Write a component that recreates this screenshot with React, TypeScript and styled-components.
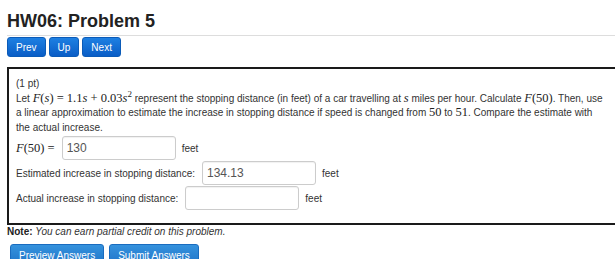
import React from 'react';
import styled, { createGlobalStyle } from 'styled-components';

const GlobalStyle = createGlobalStyle`
  html, body {
    margin: 0;
    padding: 0;
    background: #fff;
    overflow: hidden;
  }
  body {
    font-family: "Liberation Sans", Arial, sans-serif;
    color: #333;
  }
`;

function App() {
  return (
    <Page>
      <GlobalStyle />
      <Header>
        <Title>HW06: Problem 5</Title>
      </Header>
      <NavBar>
        <NavButton>Prev</NavButton>
        <NavButton>Up</NavButton>
        <NavButton>Next</NavButton>
      </NavBar>

      <ProblemBox>
        <Text>(1 pt)</Text>
        <Text>
          Let{' '}
          <M>
            <V>F</V>(<V>s</V>) = 1.1<V>s</V> + 0.03<V>s</V>
            <Sup>2</Sup>
          </M>{' '}
          represent the stopping distance (in feet) of a car travelling at <M><V>s</V></M> miles
          per hour. Calculate <M><V>F</V>(50)</M>. Then, use a linear approximation to estimate the
          increase in stopping distance if speed is changed from <M>50</M> to <M>51</M>. Compare the
          estimate with the actual increase.
        </Text>

        <AnswerRow>
          <Label>
            <M>
              <V>F</V>(50) =
            </M>
          </Label>
          <AnswerInput defaultValue="130" />
          <Unit>feet</Unit>
        </AnswerRow>
        <AnswerRow>
          <Label>Estimated increase in stopping distance:</Label>
          <AnswerInput defaultValue="134.13" />
          <Unit>feet</Unit>
        </AnswerRow>
        <AnswerRow>
          <Label>Actual increase in stopping distance:</Label>
          <AnswerInput defaultValue="" />
          <Unit>feet</Unit>
        </AnswerRow>
      </ProblemBox>

      <Note>
        <b>Note:</b> <i>You can earn partial credit on this problem.</i>
      </Note>

      <SubmitBar>
        <SubmitButton>Preview Answers</SubmitButton>
        <SubmitButton>Submit Answers</SubmitButton>
      </SubmitBar>
    </Page>
  );
}

const Page = styled.div`
  padding-left: 7px;
  width: 700px;
`;

const Header = styled.div`
  padding-top: 11px;
  padding-bottom: 4px;
  border-bottom: 1px solid #ddd;
`;

const Title = styled.h1`
  margin: 0;
  font-size: 18px;
  line-height: 20px;
  font-weight: bold;
  color: #222;
`;

const NavBar = styled.div`
  display: flex;
  gap: 3px;
  margin-top: 1px;
`;

const NavButton = styled.button`
  height: 20px;
  padding: 0 8px;
  border: 1px solid #0b5bb8;
  border-radius: 3px;
  background: linear-gradient(#1e80e2, #0a5dc6);
  color: #fff;
  font-family: "Liberation Sans", Arial, sans-serif;
  font-size: 10px;
`;

const ProblemBox = styled.div`
  margin-top: 10px;
  width: 640px;
  border: 2px solid #1a1a1a;
  padding: 8px 0 13px 7px;
  box-sizing: border-box;
`;

const Text = styled.div`
  width: 592px;
  font-size: 10px;
  line-height: 14.5px;
`;

const M = styled.span`
  font-family: "Liberation Serif", "Times New Roman", serif;
  font-size: 12.5px;
  line-height: 0;
  color: #222;
`;

const V = styled.i`
  font-style: italic;
`;

const Sup = styled.sup`
  font-size: 9px;
  line-height: 0;
  vertical-align: 5px;
`;

const AnswerRow = styled.div`
  display: flex;
  align-items: center;
  height: 24px;
  margin-top: 1px;
  font-size: 10px;

  &:first-of-type {
    margin-top: 4px;
  }
`;

const Label = styled.span`
  margin-right: 7px;
`;

const AnswerInput = styled.input`
  width: 114px;
  height: 24px;
  box-sizing: border-box;
  padding: 0 4px;
  border: 1px solid #ccc;
  border-radius: 3px;
  font-family: "Liberation Sans", Arial, sans-serif;
  font-size: 12px;
  color: #555;
  box-shadow: inset 0 1px 1px rgba(0, 0, 0, 0.06);
`;

const Unit = styled.span`
  margin-left: 6px;
`;

const Note = styled.div`
  font-size: 10px;
  line-height: 14px;
  color: #333;

  b {
    font-weight: bold;
    color: #222;
  }
`;

const SubmitBar = styled.div`
  display: flex;
  gap: 5px;
  margin-top: 5px;
  padding-left: 3px;
`;

const SubmitButton = styled.button`
  height: 22px;
  padding: 0 8px;
  border: 1px solid #1a6cbf;
  border-radius: 3px;
  background: linear-gradient(#3592dd, #1f74c8);
  color: #fff;
  font-family: "Liberation Sans", Arial, sans-serif;
  font-size: 10px;
`;

export default App;
